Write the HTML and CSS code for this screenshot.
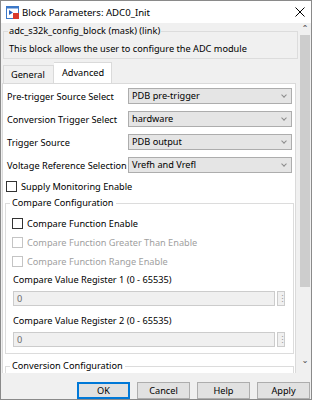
FILE: index.html
```html
<!DOCTYPE html>
<html lang="en">
<head>
    <meta charset="UTF-8">
    <title>Block Parameters: ADC0_Init</title>
    <link rel="stylesheet" href="styles.css">
</head>
<body>
    <div class="window">
        <!-- title bar -->
        <div class="titlebar">
            <svg class="app-icon" width="13" height="13" viewBox="0 0 13 13">
                <rect x="0.5" y="0.5" width="12" height="12" fill="#fff" stroke="#3c78c8"/>
                <rect x="0.5" y="0.5" width="12" height="2" fill="#3c78c8"/>
                <path d="M3 4 L7 6.5 L3 9 Z" fill="#2a64c0"/>
                <rect x="7" y="7" width="6" height="6" fill="#d83a2c"/>
            </svg>
            <span class="title">Block Parameters: ADC0_Init</span>
            <svg class="close" width="10" height="10" viewBox="0 0 10 10">
                <path d="M0.5 0.5 L9.5 9.5 M9.5 0.5 L0.5 9.5" stroke="#000" stroke-width="1"/>
            </svg>
        </div>

        <div class="main">
            <div class="content">
                <fieldset class="group mask">
                    <legend>adc_s32k_config_block (mask) (link)</legend>
                    <p>This block allows the user to configure the ADC module</p>
                </fieldset>

                <div class="tabs">
                    <div class="tab">General</div>
                    <div class="tab active">Advanced</div>
                </div>

                <div class="panel">
                    <div class="row">
                        <span>Pre-trigger Source Select</span>
                        <div class="select">PDB pre-trigger</div>
                    </div>
                    <div class="row">
                        <span>Conversion Trigger Select</span>
                        <div class="select">hardware</div>
                    </div>
                    <div class="row">
                        <span>Trigger Source</span>
                        <div class="select">PDB output</div>
                    </div>
                    <div class="row">
                        <span>Voltage Reference Selection</span>
                        <div class="select">Vrefh and Vrefl</div>
                    </div>

                    <div class="check supply"><span class="box"></span>Supply Monitoring Enable</div>

                    <fieldset class="group compare">
                        <legend>Compare Configuration</legend>
                        <div class="check"><span class="box"></span>Compare Function Enable</div>
                        <div class="check disabled"><span class="box"></span>Compare Function Greater Than Enable</div>
                        <div class="check disabled"><span class="box"></span>Compare Function Range Enable</div>

                        <div class="field-label">Compare Value Register 1 (0 - 65535)</div>
                        <div class="field">
                            <div class="input">0</div>
                            <div class="dots">&#8942;</div>
                        </div>

                        <div class="field-label second">Compare Value Register 2 (0 - 65535)</div>
                        <div class="field">
                            <div class="input">0</div>
                            <div class="dots">&#8942;</div>
                        </div>
                    </fieldset>

                    <fieldset class="group conversion">
                        <legend>Conversion Configuration</legend>
                    </fieldset>
                </div>
            </div>

            <div class="scrollbar">
                <div class="arrow">&#710;</div>
                <div class="thumb"></div>
                <div class="track"></div>
                <div class="arrow down">&#711;</div>
            </div>
        </div>

        <div class="buttons">
            <button class="btn default">OK</button>
            <button class="btn">Cancel</button>
            <button class="btn">Help</button>
            <button class="btn">Apply</button>
        </div>
    </div>
</body>
</html>
```

FILE: styles.css
```css
body {
    margin: 0;
    padding: 0;
    font-family: 'Noto Sans', 'Open Sans', sans-serif;
    font-size: 9.2px;
    color: #000;
}
.window {
    width: 312px;
    height: 400px;
    box-sizing: border-box;
    border: 1px solid #8a8a8a;
    background-color: #f0f0f0;
    display: flex;
    flex-direction: column;
    overflow: hidden;
    white-space: nowrap;
}
.titlebar {
    height: 22px;
    background-color: #fff;
    display: flex;
    align-items: center;
    padding-left: 5px;
    flex-shrink: 0;
}
.app-icon {
    display: block;
}
.title {
    margin-left: 3px;
    font-size: 9.6px;
    flex: 1;
}
.close {
    margin-right: 6px;
}
.main {
    height: 350px;
    display: flex;
    flex-shrink: 0;
}
.content {
    width: 298px;
    overflow: hidden;
}
.group {
    margin: 0;
    padding: 0;
    border: 1px solid #dcdcdc;
    min-width: 0;
}
.group legend {
    padding: 0 2px;
    margin-left: 3px;
    height: 12px;
    line-height: 12px;
}
.mask {
    margin: 2px 0 0 2px;
    width: 295px;
    box-sizing: border-box;
    padding: 0 5px 3px;
}
.mask legend {
    margin-left: -1px;
    padding: 0 1px;
}
.mask p {
    margin: 6px 0 0;
    line-height: 12px;
}
.tabs {
    display: flex;
    align-items: flex-end;
    height: 21px;
    margin-top: 3px;
    padding-left: 2px;
}
.tab {
    height: 18px;
    line-height: 18px;
    padding: 0 8px 0 7px;
    border: 1px solid #dadada;
    border-bottom: none;
    box-sizing: border-box;
}
.tab.active {
    height: 21px;
    line-height: 19px;
    background-color: #fff;
    border-left: none;
    padding: 0 7px 0 8px;
}
.panel {
    margin-left: 1px;
    width: 294px;
    height: 300px;
    box-sizing: border-box;
    background-color: #fff;
    border: 1px solid #dadada;
    border-bottom: none;
    padding: 4px 1px 0 2px;
}
.row {
    display: flex;
    justify-content: space-between;
    align-items: center;
    height: 16px;
    margin-bottom: 7px;
    padding-left: 2px;
}
.select {
    width: 164px;
    height: 16px;
    box-sizing: border-box;
    margin-right: 2px;
    background-color: #e5e5e5;
    border: 1px solid #adadad;
    line-height: 14px;
    padding-left: 3px;
    position: relative;
}
.select::after {
    content: "";
    position: absolute;
    right: 5px;
    top: 4px;
    width: 3px;
    height: 3px;
    border-right: 1px solid #8c8c8c;
    border-bottom: 1px solid #8c8c8c;
    transform: rotate(45deg);
}
.check {
    display: flex;
    align-items: center;
    height: 19px;
}
.check .box {
    width: 11px;
    height: 11px;
    box-sizing: border-box;
    border: 1px solid #333;
    background-color: #fff;
    margin-right: 4px;
}
.check.disabled {
    color: #a0a0a0;
}
.check.disabled .box {
    border-color: #c4c4c4;
}
.supply {
    height: 13px;
    margin-top: 3px;
    margin-left: 1px;
}
.compare {
    margin-top: 4px;
    padding: 0 0 6px 7px;
}
.compare legend {
    margin-left: -3px;
}
.compare .check {
    margin-left: -1px;
}
.compare .check:first-of-type {
    margin-top: 5px;
}
.field-label {
    height: 17px;
    line-height: 17px;
}
.field-label.second {
    margin-top: 6px;
}
.field {
    display: flex;
    margin-top: 3px;
    height: 15px;
}
.input {
    width: 262px;
    height: 15px;
    box-sizing: border-box;
    border: 1px solid #cccccc;
    background-color: #f0f0f0;
    color: #6d6d6d;
    line-height: 13px;
    padding-left: 3px;
}
.dots {
    width: 8px;
    height: 15px;
    box-sizing: border-box;
    margin-left: 2px;
    border: 1px solid #cccccc;
    background-color: #f0f0f0;
    color: #9a9a9a;
    font-size: 9px;
    line-height: 13px;
    text-align: center;
}
.conversion {
    margin-top: 6px;
    height: 30px;
}
.conversion legend {
    margin-left: 4px;
}
.scrollbar {
    width: 12px;
    display: flex;
    flex-direction: column;
    background-color: #f0f0f0;
}
.arrow {
    height: 12px;
    line-height: 14px;
    text-align: center;
    font-size: 11px;
    color: #606060;
}
.arrow.down {
    line-height: 10px;
}
.thumb {
    height: 252px;
    margin: 0 1px;
    background-color: #cdcdcd;
}
.track {
    flex: 1;
}
.buttons {
    height: 26px;
    display: flex;
    justify-content: flex-end;
    gap: 7px;
    padding: 9px 1px 0 0;
    box-sizing: border-box;
    flex-shrink: 0;
}
.btn {
    width: 53px;
    height: 17px;
    margin: 0;
    padding: 0;
    font-family: 'Noto Sans', 'Open Sans', sans-serif;
    font-size: 9.2px;
    line-height: 15px;
    background-color: #e1e1e1;
    border: 1px solid #adadad;
    color: #000;
}
.btn.default {
    border-color: #0078d7;
    box-shadow: inset 0 0 0 1px #0078d7;
}
```
